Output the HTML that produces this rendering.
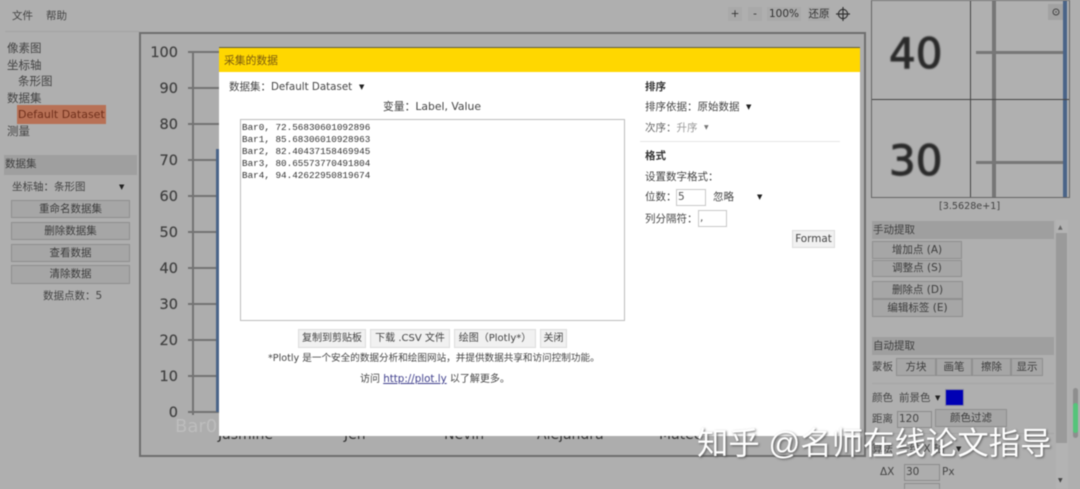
<!DOCTYPE html>
<html lang="zh"><head><meta charset="utf-8"><title>采集的数据</title>
<style>
html,body{margin:0;padding:0;width:1080px;height:489px;overflow:hidden;background:#afafaf}
#r{position:relative;width:1080px;height:489px;overflow:hidden;background:#afafaf;filter:blur(.45px);font-family:"DejaVu Sans","Noto Sans CJK SC",sans-serif;font-size:10.5px;color:#333}
#r div,#r a,#r svg{position:absolute}
.t{white-space:nowrap;line-height:14px}
.d{color:#444}
.b{background:#a6a6a6;border:1px solid #8f8f8f;box-sizing:border-box;text-align:center;line-height:16px;color:#3c3c3c;white-space:nowrap}
.h{background:#9f9f9f;color:#3f3f3f;line-height:19px;padding-left:1px;box-sizing:border-box}
.y{font-size:14.5px;line-height:20px;width:40px;text-align:right;left:138px;color:#404040;margin-top:1px;-webkit-text-stroke:.2px #404040}
.tk{left:188px;width:31px;height:2px;background:#737373}
.x{font-size:14px;color:#333;line-height:16px;white-space:nowrap}
.w{background:#f1f1f1;border:1px solid #dcdcdc;box-sizing:border-box;text-align:center;line-height:17px;color:#444;white-space:nowrap;font-size:10px;height:19px;top:329px}
.i{background:#fff;border:1px solid #c8c8c8;box-sizing:border-box;line-height:15px;padding-left:1px;color:#555}
.ri{background:#adadad;border:1px solid #8c8c8c;box-sizing:border-box;line-height:14px;padding-left:1px;color:#444}
.big{font-size:42px;line-height:58px;color:#2a2a2a;filter:blur(.8px);-webkit-text-stroke:1px #2a2a2a}
.a{font-size:7px;color:#222}
</style></head><body><div id="r">

<div class="t" style="left:12px;top:9px;color:#444">文件</div>
<div class="t" style="left:46px;top:9px;color:#444">帮助</div>
<div style="left:5px;top:31px;width:134px;height:1px;background:#a3a3a3"></div>

<div class="t d" style="left:7px;top:41px;font-size:11.5px">像素图</div>
<div class="t d" style="left:7px;top:58px;font-size:11.5px">坐标轴</div>
<div class="t d" style="left:18px;top:74px;font-size:11.5px">条形图</div>
<div class="t d" style="left:7px;top:91px;font-size:11.5px">数据集</div>
<div style="left:17px;top:105px;width:89px;height:19px;background:#b87156"></div>
<div class="t" style="left:18px;top:108px;font-size:11px;color:#70301c">Default Dataset</div>
<div class="t d" style="left:7px;top:124px;font-size:11.5px">测量</div>

<div class="h" style="left:4px;top:155px;width:133px;height:20px;padding-left:1px">数据集</div>
<div class="t d" style="left:12px;top:180px">坐标轴：条形图</div>
<div class="t a" style="left:119px;top:180px">▼</div>
<div class="b" style="left:11px;top:200px;width:119px;height:18px">重命名数据集</div>
<div class="b" style="left:11px;top:222px;width:119px;height:18px">删除数据集</div>
<div class="b" style="left:11px;top:244px;width:119px;height:18px">查看数据</div>
<div class="b" style="left:11px;top:265px;width:119px;height:19px">清除数据</div>
<div class="t d" style="left:43px;top:289px">数据点数：5</div>

<div class="t" style="left:728px;top:7px;width:14px;height:14px;background:#a9a9a9;text-align:center">+</div>
<div class="t" style="left:748px;top:7px;width:14px;height:14px;background:#a9a9a9;text-align:center">-</div>
<div class="t" style="left:767px;top:7px;width:34px;height:14px;background:#a9a9a9;text-align:center;font-size:10.5px">100%</div>
<div class="t" style="left:808px;top:7px;width:22px;height:14px;background:#a9a9a9;text-align:center;font-size:10.5px">还原</div>
<svg style="left:836px;top:7px" width="14" height="14" viewBox="0 0 14 14"><circle cx="7" cy="7" r="4.6" fill="none" stroke="#333" stroke-width="1.2"/><path d="M7 0V14M0 7H14" stroke="#333" stroke-width="1.2"/></svg>

<div style="left:139px;top:32px;width:727px;height:425px;box-sizing:border-box;border:2px solid #6e6e6e;background:#adadad"></div>
<div class="y" style="top:42px">100</div>
<div class="y" style="top:78px">90</div>
<div class="y" style="top:114px">80</div>
<div class="y" style="top:150px">70</div>
<div class="y" style="top:186px">60</div>
<div class="y" style="top:222px">50</div>
<div class="y" style="top:258px">40</div>
<div class="y" style="top:294px">30</div>
<div class="y" style="top:330px">20</div>
<div class="y" style="top:366px">10</div>
<div class="y" style="top:402px">0</div>
<div class="tk" style="top:51px"></div>
<div class="tk" style="top:87px"></div>
<div class="tk" style="top:123px"></div>
<div class="tk" style="top:159px"></div>
<div class="tk" style="top:195px"></div>
<div class="tk" style="top:231px"></div>
<div class="tk" style="top:267px"></div>
<div class="tk" style="top:303px"></div>
<div class="tk" style="top:339px"></div>
<div class="tk" style="top:375px"></div>
<div class="tk" style="top:411px"></div>
<div style="left:192px;top:52px;width:2px;height:363px;background:#737373"></div>
<div style="left:216px;top:149px;width:3px;height:263px;background:#4a6488"></div>
<div class="t" style="left:175px;top:417px;font-size:18px;line-height:20px;color:#bdbdbd">Bar0</div>
<div class="x" style="left:218px;top:427px">Jasmine</div>
<div class="x" style="left:344px;top:427px">Jen</div>
<div class="x" style="left:444px;top:427px">Nevin</div>
<div class="x" style="left:537px;top:427px">Alejandra</div>
<div class="x" style="left:659px;top:427px">Mateo</div>

<!-- dialog -->
<div style="left:219px;top:47px;width:641px;height:389px;background:#fff"></div>
<div style="left:219px;top:47px;width:641px;height:1px;background:#5e5a3c"></div>
<div style="left:219px;top:48px;width:641px;height:24px;background:#ffd700"></div>
<div class="t" style="left:224px;top:54px;color:#7c5c10;font-size:10.8px">采集的数据</div>

<div class="t d" style="left:229px;top:80px">数据集：<span style="font-size:10.3px">Default Dataset</span></div>
<div class="t a" style="left:359px;top:80px">▼</div>
<div class="t d" style="left:383px;top:100px;font-size:10.8px">变量：Label, Value</div>
<div style="left:240px;top:119px;width:385px;height:202px;box-sizing:border-box;border:1px solid #bdbdbd;background:#fff"></div>
<div class="t" style="left:242px;top:122px;font-family:'Liberation Mono','Liberation Serif',monospace;font-size:9.3px;line-height:12px;color:#333;white-space:pre">Bar0, 72.56830601092896
Bar1, 85.68306010928963
Bar2, 82.40437158469945
Bar3, 80.65573770491804
Bar4, 94.42622950819674</div>

<div class="w" style="left:298px;width:68px">复制到剪贴板</div>
<div class="w" style="left:370px;width:80px">下载 .CSV 文件</div>
<div class="w" style="left:454px;width:82px">绘图（Plotly*）</div>
<div class="w" style="left:540px;width:27px">关闭</div>
<div class="t d" style="left:268px;top:352px;font-size:9.6px">*Plotly 是一个安全的数据分析和绘图网站，并提供数据共享和访问控制功能。</div>
<div class="t d" style="left:360px;top:372px;font-size:10px">访问 <span style="color:#3f3f8c;text-decoration:underline;font-size:10.3px">http://plot.ly</span> 以了解更多。</div>

<div class="t" style="left:645px;top:80px;font-weight:bold;color:#333">排序</div>
<div class="t d" style="left:645px;top:100px">排序依据：原始数据</div>
<div class="t a" style="left:746px;top:100px">▼</div>
<div class="t" style="left:645px;top:121px;color:#666">次序：<span style="color:#999">升序</span></div>
<div class="t" style="left:704px;top:121px;font-size:6px;color:#777">▼</div>
<div style="left:640px;top:141px;width:200px;height:1px;background:#e6e6e6"></div>
<div class="t" style="left:645px;top:149px;font-weight:bold;color:#333">格式</div>
<div class="t d" style="left:645px;top:170px">设置数字格式：</div>
<div class="t d" style="left:645px;top:190px">位数：</div>
<div class="i" style="left:676px;top:189px;width:30px;height:17px">5</div>
<div class="t d" style="left:713px;top:190px">忽略</div>
<div class="t a" style="left:757px;top:190px">▼</div>
<div class="t d" style="left:645px;top:212px">列分隔符：</div>
<div class="i" style="left:698px;top:210px;width:29px;height:17px">,</div>
<div class="w" style="left:792px;top:230px;width:43px;height:18px;line-height:16px;font-size:10.4px">Format</div>

<!-- zoom view -->
<div style="left:871px;top:0;width:199px;height:198px;box-sizing:border-box;border:1px solid #666;border-top:1px solid #777;background:#b0b0b0;overflow:hidden"></div>
<div class="t big" style="left:889px;top:25px">40</div>
<div class="t big" style="left:889px;top:132px">30</div>
<div style="left:992px;top:1px;width:4px;height:196px;background:#767676"></div>
<div style="left:976px;top:51px;width:88px;height:3px;background:#777"></div>
<div style="left:976px;top:161px;width:88px;height:3px;background:#777"></div>
<div style="left:1063px;top:1px;width:4px;height:196px;background:#4a6488"></div>
<div style="left:970px;top:1px;width:1px;height:196px;background:#444"></div>
<div style="left:872px;top:99px;width:197px;height:1px;background:#444"></div>
<div style="left:1048px;top:4px;width:15px;height:16px;background:#a2a2a2"></div>
<svg style="left:1052px;top:8px" width="8" height="8" viewBox="0 0 8 8"><circle cx="4" cy="4" r="3" fill="none" stroke="#444" stroke-width="1"/><circle cx="4" cy="4" r=".7" fill="#444"/></svg>
<div class="t" style="left:939px;top:200px;font-size:9.6px;color:#444">[3.5628e+1]</div>

<!-- right panel -->
<div style="left:1056px;top:220px;width:12px;height:269px;background:#b3b3b3"></div>
<div style="left:1056px;top:233px;width:11px;height:210px;background:#9a9a9a"></div>
<div class="t" style="left:1058px;top:221px;font-size:6px;color:#666">▲</div>
<div class="t" style="left:1058px;top:474px;font-size:6px;color:#444">▼</div>
<div class="h" style="left:872px;top:221px;width:182px;height:18px;line-height:18px">手动提取</div>
<div class="b" style="left:872px;top:241px;width:90px;height:18px">增加点 (A)</div>
<div class="b" style="left:872px;top:260px;width:90px;height:17px;line-height:15px">调整点 (S)</div>
<div class="b" style="left:872px;top:281px;width:91px;height:18px">删除点 (D)</div>
<div class="b" style="left:872px;top:299px;width:91px;height:18px">编辑标签 (E)</div>
<div class="h" style="left:872px;top:337px;width:182px;height:18px;line-height:18px">自动提取</div>
<div class="t d" style="left:872px;top:360px">蒙板</div>
<div class="b" style="left:896px;top:358px;width:40px;height:18px">方块</div>
<div class="b" style="left:936px;top:358px;width:36px;height:18px">画笔</div>
<div class="b" style="left:972px;top:358px;width:39px;height:18px">擦除</div>
<div class="b" style="left:1011px;top:358px;width:32px;height:18px">显示</div>
<div style="left:872px;top:383px;width:182px;height:1px;background:#a4a4a4"></div>
<div class="t d" style="left:872px;top:391px">颜色</div>
<div class="t d" style="left:899px;top:391px">前景色</div>
<div class="t a" style="left:935px;top:391px">▼</div>
<div style="left:945px;top:389px;width:19px;height:17px;background:#0000b4;border:1px solid #8c8ca0;box-sizing:border-box"></div>
<div class="t d" style="left:872px;top:412px">距离</div>
<div class="ri" style="left:897px;top:411px;width:35px;height:17px">120</div>
<div class="b" style="left:935px;top:409px;width:72px;height:18px">颜色过滤</div>
<div style="left:872px;top:433px;width:182px;height:1px;background:#a4a4a4"></div>
<div class="t d" style="left:872px;top:442px">算法</div>
<div class="t d" style="left:899px;top:442px">一维 X 轴</div>
<div class="t a" style="left:956px;top:442px">▼</div>
<div class="t d" style="left:880px;top:465px">ΔX</div>
<div class="ri" style="left:904px;top:464px;width:36px;height:17px">30</div>
<div class="t d" style="left:942px;top:465px">Px</div>
<div class="ri" style="left:904px;top:483px;width:36px;height:17px"></div>

<div style="left:1073px;top:388px;width:5px;height:50px;background:#8e8e8e;border-radius:3px"></div>
<div style="left:1073px;top:403px;width:5px;height:30px;background:#55c47a;border-radius:3px"></div>

<div class="t" style="left:697px;top:426px;font-size:31.4px;line-height:36px;color:#fff;text-shadow:1px 1px 2px rgba(70,70,70,.8);font-family:'Liberation Sans','Noto Sans CJK SC',sans-serif">知乎 @名师在线论文指导</div>
</div></body></html>
